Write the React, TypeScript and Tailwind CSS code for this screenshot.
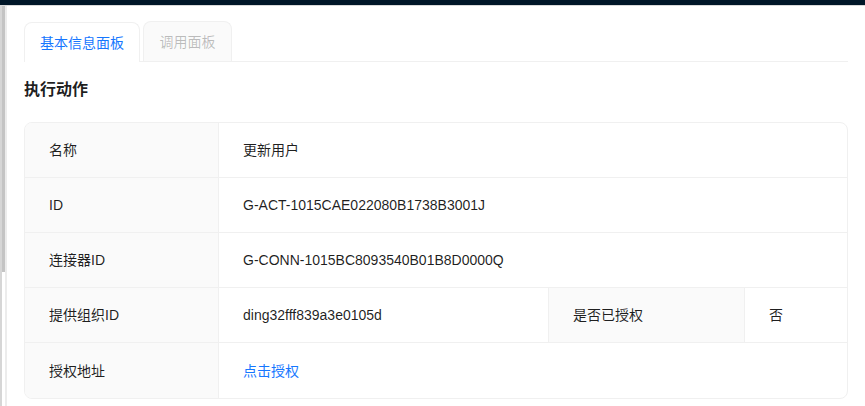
import React from 'react'

const font = { fontFamily: '"Liberation Sans", "Noto Sans CJK SC", sans-serif' }

function Row({ label, children, last }: { label: string; children: React.ReactNode; last?: boolean }) {
  return (
    <div className={`flex h-[55px] ${last ? '' : 'border-b border-[#f0f0f0]'}`}>
      <div className="w-[194px] shrink-0 bg-[#fafafa] border-r border-[#f0f0f0] flex items-center pl-6 text-[#000000e0]">
        {label}
      </div>
      <div className="flex-1 flex items-center pl-6 text-[#000000e0]">{children}</div>
    </div>
  )
}

export default function App() {
  return (
    <div className="w-[865px] h-[406px] bg-white overflow-hidden text-sm" style={font}>
      <div className="h-[5px] bg-[#001628]" />
      <div className="h-px bg-[#d9d9d9]" />
      <div className="flex h-[400px]">
        {/* scroll edge */}
        <div className="w-[7px] shrink-0 flex">
          <div className="w-[2px] bg-[#d6d6d6]" />
          <div className="w-[3px] bg-[#c4c4c4] h-[266px]" />
          <div className="w-[2px] bg-[#ececec]" />
        </div>
        <div className="flex-1 pl-[17px] pr-[17px] pt-4">
          {/* tabs */}
          <div className="flex items-end gap-[3px] border-b border-[#f0f0f0] h-[40px]">
            <div className="h-[40px] w-[116px] flex items-center justify-center border border-b-0 border-[#f0f0f0] rounded-t-lg bg-white text-[#1677ff] -mb-px">
              基本信息面板
            </div>
            <div className="h-[40px] w-[89px] flex items-center justify-center border border-b-0 border-[#f0f0f0] rounded-t-lg bg-[#fafafa] text-[#00000040]">
              调用面板
            </div>
          </div>
          <div className="mt-[16px] mb-[20px] text-base font-bold text-[#000000e0] h-[24px] leading-6">执行动作</div>
          <div className="border border-[#f0f0f0] rounded-lg overflow-hidden">
            <Row label="名称">更新用户</Row>
            <Row label="ID">G-ACT-1015CAE022080B1738B3001J</Row>
            <Row label="连接器ID">G-CONN-1015BC8093540B01B8D0000Q</Row>
            <div className="flex h-[55px] border-b border-[#f0f0f0]">
              <div className="w-[194px] shrink-0 bg-[#fafafa] border-r border-[#f0f0f0] flex items-center pl-6 text-[#000000e0]">
                提供组织ID
              </div>
              <div className="w-[330px] shrink-0 border-r border-[#f0f0f0] flex items-center pl-6 text-[#000000e0]">
                ding32fff839a3e0105d
              </div>
              <div className="w-[196px] shrink-0 bg-[#fafafa] border-r border-[#f0f0f0] flex items-center pl-6 text-[#000000e0]">
                是否已授权
              </div>
              <div className="flex-1 flex items-center pl-6 text-[#000000e0]">否</div>
            </div>
            <Row label="授权地址" last>
              <span className="text-[#1677ff]">点击授权</span>
            </Row>
          </div>
        </div>
      </div>
    </div>
  )
}
